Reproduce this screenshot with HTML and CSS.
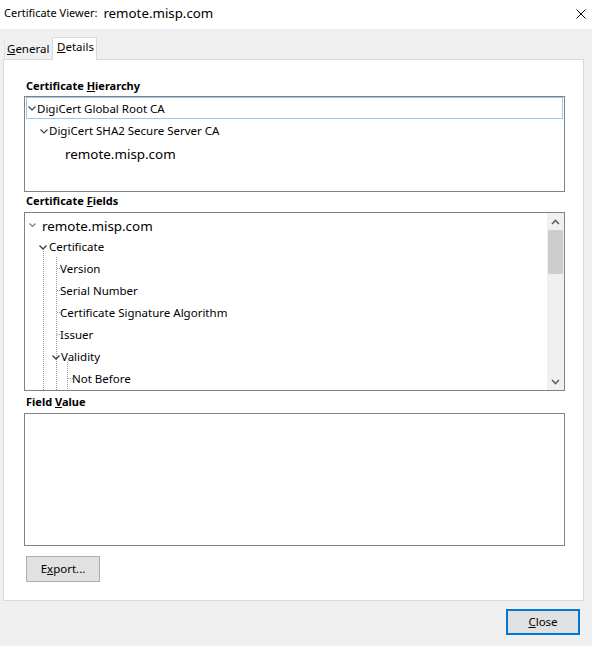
FILE: index.html
```html
<!DOCTYPE html>
<html lang="en">
<head>
<meta charset="utf-8">
<title>Certificate Viewer: remote.misp.com</title>
<link rel="stylesheet" href="styles.css">
</head>
<body>
<div class="window">
  <div class="titlebar">
    <span class="title-label">Certificate Viewer:</span>
    <span class="title-host">remote.misp.com</span>
    <span class="title-close">
      <svg width="10" height="10" viewBox="0 0 10 10"><path d="M0.5 0.5 L9.5 9.5 M9.5 0.5 L0.5 9.5" stroke="#000" stroke-width="1" fill="none"/></svg>
    </span>
  </div>

  <div class="tabs">
    <div class="tab"><u>G</u>eneral</div>
    <div class="tab tab-active"><u>D</u>etails</div>
  </div>

  <div class="panel">
    <div class="label">Certificate <u>H</u>ierarchy</div>
    <div class="box box-hier">
      <div class="row row-sel hier-1">
        <svg class="chev" width="8" height="5" viewBox="0 0 8 5"><polyline points="0.5,0.5 4,4 7.5,0.5" fill="none" stroke="#3c3c3c" stroke-width="1.1"/></svg>
        <span>DigiCert Global Root CA</span>
      </div>
      <div class="row hier-2">
        <svg class="chev" width="8" height="5" viewBox="0 0 8 5"><polyline points="0.5,0.5 4,4 7.5,0.5" fill="none" stroke="#3c3c3c" stroke-width="1.1"/></svg>
        <span>DigiCert SHA2 Secure Server CA</span>
      </div>
      <div class="row row-big hier-3"><span>remote.misp.com</span></div>
    </div>

    <div class="label label-fields">Certificate <u>F</u>ields</div>
    <div class="box box-fields">
      <div class="tree">
        <svg class="tree-lines" width="522" height="177" viewBox="0 0 522 177">
          <g stroke="#9a9a9a" stroke-width="1" stroke-dasharray="1 1" fill="none">
            <line x1="18.5" y1="38" x2="18.5" y2="177"/>
            <line x1="31.5" y1="44" x2="31.5" y2="177"/>
            <line x1="32" y1="55.5" x2="36" y2="55.5"/>
            <line x1="32" y1="77.5" x2="36" y2="77.5"/>
            <line x1="32" y1="99.5" x2="36" y2="99.5"/>
            <line x1="32" y1="121.5" x2="36" y2="121.5"/>
            <line x1="42.5" y1="149" x2="42.5" y2="177"/>
            <line x1="43" y1="165.5" x2="48" y2="165.5"/>
          </g>
        </svg>
        <div class="row row-big f-root">
          <svg class="chev chev-root" width="7" height="5" viewBox="0 0 7 5"><polyline points="0.5,0.5 3.5,3.5 6.5,0.5" fill="none" stroke="#7a7a7a" stroke-width="1.1"/></svg>
          <span>remote.misp.com</span>
        </div>
        <div class="row f-cert">
          <svg class="chev" width="8" height="5" viewBox="0 0 8 5"><polyline points="0.5,0.5 4,4 7.5,0.5" fill="none" stroke="#3c3c3c" stroke-width="1.3"/></svg>
          <span>Certificate</span>
        </div>
        <div class="row f-leaf">Version</div>
        <div class="row f-leaf">Serial Number</div>
        <div class="row f-leaf">Certificate Signature Algorithm</div>
        <div class="row f-leaf">Issuer</div>
        <div class="row f-valid">
          <svg class="chev" width="8" height="5" viewBox="0 0 8 5"><polyline points="0.5,0.5 4,4 7.5,0.5" fill="none" stroke="#3c3c3c" stroke-width="1.3"/></svg>
          <span>Validity</span>
        </div>
        <div class="row f-leaf2">Not Before</div>
      </div>
      <div class="scrollbar">
        <div class="sb-arrow">
          <svg width="9" height="6" viewBox="0 0 9 6"><polyline points="1,5 4.5,1.5 8,5" fill="none" stroke="#606060" stroke-width="1.6"/></svg>
        </div>
        <div class="sb-thumb"></div>
        <div class="sb-track"></div>
        <div class="sb-arrow">
          <svg width="9" height="6" viewBox="0 0 9 6"><polyline points="1,1 4.5,4.5 8,1" fill="none" stroke="#606060" stroke-width="1.6"/></svg>
        </div>
      </div>
    </div>

    <div class="label label-value">Field <u>V</u>alue</div>
    <div class="box box-value"></div>

    <button class="btn btn-export">E<u>x</u>port...</button>
  </div>

  <div class="footer">
    <button class="btn btn-close"><u>C</u>lose</button>
  </div>
</div>
</body>
</html>
```

FILE: styles.css
```css
* {
  box-sizing: border-box;
}

html, body {
  margin: 0;
  padding: 0;
}

body {
  background: #f0f0f0;
  font-family: "Noto Sans", "Open Sans", sans-serif;
  font-size: 11.5px;
  color: #000;
  width: 592px;
  height: 646px;
  overflow: hidden;
}

u {
  text-decoration: underline;
  text-underline-offset: 1px;
  text-decoration-thickness: 1px;
}

/* Title bar */
.titlebar {
  height: 29px;
  background: #fff;
  display: flex;
  align-items: flex-start;
  padding: 4px 0 0 4px;
  line-height: 18px;
}

.title-label {
  font-size: 11px;
}

.title-host {
  font-size: 13.3px;
  margin-left: 6px;
}

.title-close {
  margin-left: auto;
  margin-right: 6px;
  margin-top: 5px;
  height: 10px;
  display: flex;
}

/* Tabs */
.tabs {
  height: 30px;
  display: flex;
  align-items: flex-end;
  padding-left: 4px;
}

.tab {
  height: 20px;
  line-height: 20px;
  padding: 0 0 0 2px;
  width: 48px;
  border-left: 1px solid #e3e3e3;
  font-size: 11.5px;
}

.tab-active {
  position: relative;
  z-index: 1;
  width: 45px;
  height: 23px;
  margin-bottom: -1px;
  background: #fff;
  border: 1px solid #d9d9d9;
  border-bottom: none;
  line-height: 17px;
  padding-left: 4px;
}

/* Panel */
.panel {
  margin: 0 8px 0 3px;
  height: 542px;
  background: #fff;
  border: 1px solid #d9d9d9;
  padding: 18px 18px 0 20px;
  display: flex;
  flex-direction: column;
}

.label {
  height: 16px;
  line-height: 16px;
  margin: 0 0 2px 2px;
  font-weight: 700;
  font-size: 11px;
}

.label-fields {
  margin-top: 1px;
  margin-bottom: 3px;
}

.label-value {
  margin-top: 3px;
  margin-bottom: 3px;
}

.box {
  border: 1px solid #828282;
  background: #fff;
  flex: none;
}

.box-hier {
  height: 96px;
}

.box-fields {
  height: 179px;
  display: flex;
}

.box-value {
  height: 133px;
}

/* Rows */
.row {
  height: 22px;
  line-height: 20px;
  padding-top: 2px;
  display: flex;
  align-items: center;
  white-space: nowrap;
}

.row-big {
  font-size: 13.4px;
  padding-top: 3px;
}

.chev {
  flex: none;
  margin-right: 1px;
}

.row-sel {
  margin: 0 1px;
  border: 1px solid #99c9ef;
}

.hier-1 {
  padding-left: 1px;
  padding-top: 1px;
}

.hier-2 {
  padding-left: 15px;
}

.hier-3 {
  padding-left: 40px;
}

/* Fields tree */
.tree {
  flex: 1;
  position: relative;
  overflow: hidden;
}

.tree-lines {
  position: absolute;
  top: 0;
  left: 0;
  pointer-events: none;
}

.tree .row {
  position: relative;
}

.f-root {
  padding-left: 4px;
}

.chev-root {
  margin-right: 6px;
}

.f-cert {
  padding-left: 14px;
}

.f-cert .chev {
  margin-right: 2px;
}

.f-leaf {
  padding-left: 35px;
}

.f-valid {
  padding-left: 27px;
}

.f-leaf2 {
  padding-left: 47px;
}

/* Scrollbar */
.scrollbar {
  width: 17px;
  flex: none;
  background: #f0f0f0;
  display: flex;
  flex-direction: column;
}

.sb-arrow {
  height: 17px;
  display: flex;
  align-items: center;
  justify-content: center;
  flex: none;
}

.sb-thumb {
  height: 44px;
  margin: 0 1px;
  background: #cdcdcd;
  flex: none;
}

.sb-track {
  flex: 1;
}

/* Buttons */
.btn {
  font-family: "Noto Sans", "Open Sans", sans-serif;
  font-size: 11.5px;
  color: #000;
  background: #e1e1e1;
  border: 1px solid #adadad;
  width: 74px;
  height: 26px;
  padding: 0;
  line-height: 22px;
  text-align: center;
}

.btn-export {
  margin: 10px 0 0 2px;
}

.footer {
  display: flex;
  justify-content: flex-end;
  padding: 8px 12px 0 0;
}

.btn-close {
  border: 2px solid #0078d7;
}
```
